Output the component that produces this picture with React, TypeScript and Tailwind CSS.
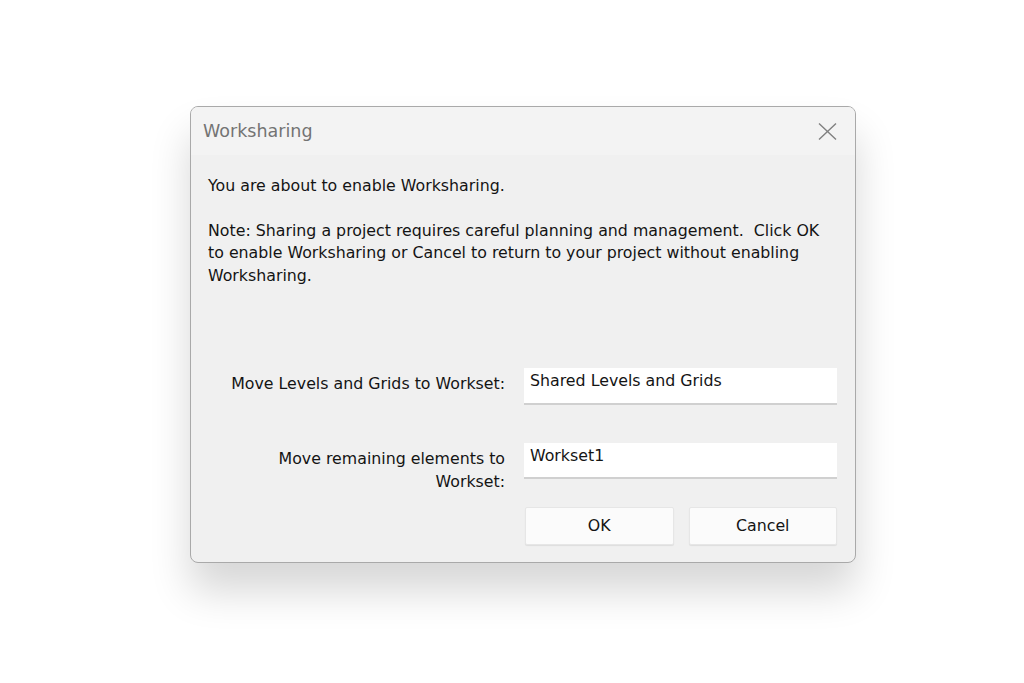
const font = { fontFamily: '"DejaVu Sans", sans-serif' };

export default function App() {
  return (
    <div className="h-[683px] w-full overflow-hidden bg-white pl-[190px] pt-[106px]" style={font}>
      {/* ダイアログ本体 */}
      <div className="w-[666px] h-[457px] rounded-[8px] border-[1.5px] border-[#a9a9a9] bg-[#f0f0f0] shadow-[0_28px_40px_rgba(0,0,0,0.16)] overflow-hidden flex flex-col">
        {/* タイトルバー */}
        <div className="h-[48px] shrink-0 bg-[#f3f3f3] flex items-center justify-between pl-[12px] pr-[18px]">
          <span className="text-[17.5px] text-[#737373]">Worksharing</span>
          <svg width="19" height="17" viewBox="0 0 19 17" fill="none" stroke="#808080" strokeWidth="1.4">
            <path d="M1 0.5 L18 16.5 M18 0.5 L1 16.5" />
          </svg>
        </div>

        {/* 本文 */}
        <div className="flex-1 flex flex-col pl-[17px] pr-[18px] pt-[20px] text-[15.8px] leading-[22.5px] text-[#141414]">
          <p>You are about to enable Worksharing.</p>
          <p className="mt-[22px]">
            Note: Sharing a project requires careful planning and management.&nbsp; Click OK
            <br />
            to enable Worksharing or Cancel to return to your project without enabling
            <br />
            Worksharing.
          </p>

          <div className="mt-[81px] grid grid-cols-[297px_313px] gap-x-[19px]">
            <div className="text-right pt-[5px]">Move Levels and Grids to Workset:</div>
            <div className="h-[37px] bg-white border-b-[2px] border-[#d0d0d0] pl-[6px] pt-[2px]">Shared Levels and Grids</div>

            <div className="text-right pt-[5px] mt-[38px]">
              Move remaining elements to
              <br />
              Workset:
            </div>
            <div className="h-[36px] mt-[38px] bg-white border-b-[2px] border-[#d0d0d0] pl-[6px] pt-[2px]">Workset1</div>

            <div />
            <div className="mt-[14px] ml-[1px] flex gap-[15px]">
              <button className="flex-1 h-[38px] bg-[#fbfbfb] border border-[#e6e6e6] rounded-[2px] shadow-[0_1px_1px_rgba(0,0,0,0.08)]">OK</button>
              <button className="flex-1 h-[38px] bg-[#fbfbfb] border border-[#e6e6e6] rounded-[2px] shadow-[0_1px_1px_rgba(0,0,0,0.08)]">Cancel</button>
            </div>
          </div>
        </div>
      </div>
    </div>
  );
}
